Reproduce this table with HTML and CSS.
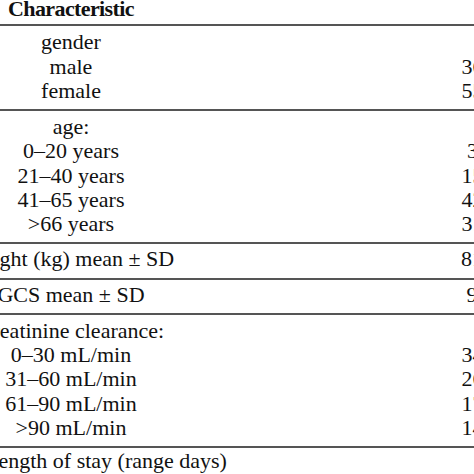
FILE: index.html
```html
<!DOCTYPE html>
<html lang="en">
<head>
<meta charset="utf-8">
<title>Characteristics table</title>
<link rel="stylesheet" href="styles.css">
</head>
<body>
<div class="table">
  <div class="row head">
    <div class="c1">Characteristic</div>
    <div class="c2">n (%)</div>
  </div>
  <div class="row group">
    <div class="c1"><div>gender</div><div>male</div><div>female</div></div>
    <div class="c2"><div>&nbsp;</div><div>36 (39.6%)</div><div>55 (60.4%)</div></div>
  </div>
  <div class="row group">
    <div class="c1"><div>age:</div><div>0–20 years</div><div>21–40 years</div><div>41–65 years</div><div>&gt;66 years</div></div>
    <div class="c2"><div>&nbsp;</div><div>3 (3.30%)</div><div>15 (16.5%)</div><div>42 (46.2%)</div><div>31 (34.1%)</div></div>
  </div>
  <div class="row single">
    <div class="c1">weight (kg) mean ± SD</div>
    <div class="c2">81.3 ± 16.8</div>
  </div>
  <div class="row single">
    <div class="c1">GCS mean ± SD</div>
    <div class="c2">9.4 ± 3.75</div>
  </div>
  <div class="row group">
    <div class="c1"><div>Creatinine clearance:</div><div>0–30 mL/min</div><div>31–60 mL/min</div><div>61–90 mL/min</div><div>&gt;90 mL/min</div></div>
    <div class="c2"><div>&nbsp;</div><div>34 (37.4%)</div><div>26 (28.6%)</div><div>17 (18.7%)</div><div>14 (15.4%)</div></div>
  </div>
  <div class="row last">
    <div class="c1 left">Length of stay (range days)</div>
    <div class="c2">3–45</div>
  </div>
</div>
</body>
</html>
```

FILE: styles.css
```css
html, body {
  margin: 0;
  padding: 0;
  overflow: hidden;
  background: #ffffff;
}

body {
  width: 474px;
  height: 474px;
  font-family: "Liberation Serif", "Times New Roman", serif;
  font-size: 22px;
  line-height: 24.25px;
  color: #111111;
}

.table {
  width: 890px;
  margin-left: -100px;
}

.row {
  display: grid;
  grid-template-columns: 342px 538px;
  border-bottom: 2px solid #555555;
}

.c1,
.c2 {
  text-align: center;
  white-space: nowrap;
}

.head {
  margin-top: -3px;
  padding-bottom: 3px;
  font-weight: bold;
  letter-spacing: -0.6px;
}

.group {
  padding: 4px 0 6px;
}

.single {
  padding: 3px 0 6px;
}

.last {
  border-bottom: none;
  padding-top: 1px;
}

.left {
  text-align: left;
  padding-left: 85px;
}
```
